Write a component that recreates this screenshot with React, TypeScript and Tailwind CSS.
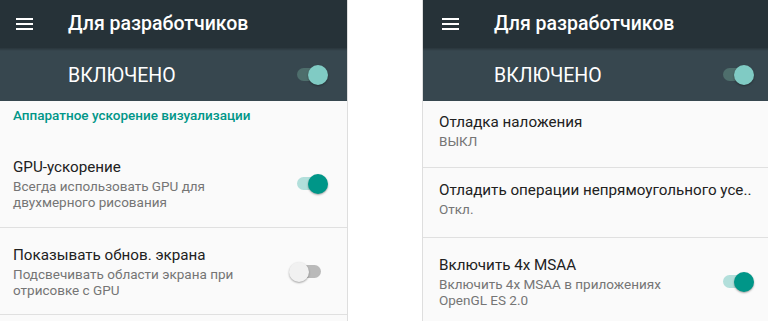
import React from 'react';

type Pref = {
  title: string;
  summary: string[];
  toggle?: 'on' | 'off';
  pad: string;
};

const Hamburger = () => (
  <div className="flex w-[17px] flex-col gap-[3px]">
    <span className="h-[2px] w-full bg-white" />
    <span className="h-[2px] w-full bg-white" />
    <span className="h-[2px] w-full bg-white" />
  </div>
);

const Toggle = ({ on, dark }: { on: boolean; dark?: boolean }) => {
  const track = dark ? 'bg-[#4e6e6c]' : on ? 'bg-[#b2dfdb]' : 'bg-[#bababa]';
  const thumb = dark ? 'bg-[#80cbc4]' : on ? 'bg-[#009688]' : 'bg-[#f1f1f1]';
  return (
    <div className="relative flex h-[20px] w-[39px] shrink-0 items-center">
      <span className={`ml-[8px] h-[13px] w-[24px] rounded-full ${track}`} />
      <span
        className={`absolute top-0 size-[20px] rounded-full shadow-[0_1px_2px_rgba(0,0,0,0.35)] ${thumb} ${
          on ? 'right-0' : 'left-0'
        }`}
      />
    </div>
  );
};

const PrefRow = ({ item }: { item: Pref }) => (
  <div className={`flex items-center pl-[17px] pr-[28px] ${item.pad}`}>
    <div className="min-w-0 flex-1">
      <div className="whitespace-nowrap text-[15.2px] leading-[20px] text-[#212121]">{item.title}</div>
      <div className="mt-px text-[13.5px] leading-[16px] text-[#757575]">
        {item.summary.map((line) => (
          <div key={line} className="whitespace-nowrap">
            {line}
          </div>
        ))}
      </div>
    </div>
    {item.toggle && <Toggle on={item.toggle === 'on'} />}
  </div>
);

const Divider = () => <div className="h-px w-full bg-[#e0e0e0]" />;

const Phone = ({ children }: { children: React.ReactNode }) => (
  <div className="h-full w-[360px] bg-[#fafafa]">
    {/* TOOLBAR */}
    <div className="flex h-[48px] items-center bg-[#263238] pl-[20px]">
      <Hamburger />
      <span className="ml-[35px] text-[19.5px] font-medium text-white">Для разработчиков</span>
    </div>

    {/* MASTER SWITCH */}
    <div className="relative flex h-[53px] items-center bg-[#37474f] pl-[72px] pr-[28px]">
      <div className="absolute inset-x-0 top-0 h-[3px] bg-gradient-to-b from-black/25 to-transparent" />
      <span className="mt-[2px] flex-1 text-[19.5px] text-white">ВКЛЮЧЕНО</span>
      <Toggle on dark />
    </div>

    {children}
  </div>
);

const leftItems: Pref[] = [
  {
    title: 'GPU-ускорение',
    summary: ['Всегда использовать GPU для', 'двухмерного рисования'],
    toggle: 'on',
    pad: 'pt-[17px] pb-[17px]',
  },
  {
    title: 'Показывать обнов. экрана',
    summary: ['Подсвечивать области экрана при', 'отрисовке с GPU'],
    toggle: 'off',
    pad: 'pt-[17px] pb-[16px]',
  },
];

const rightItems: Pref[] = [
  { title: 'Отладка наложения', summary: ['ВЫКЛ'], pad: 'pt-[11px] pb-[18px]' },
  {
    title: 'Отладить операции непрямоугольного усе..',
    summary: ['Откл.'],
    pad: 'pt-[12px] pb-[20px]',
  },
  {
    title: 'Включить 4x MSAA',
    summary: ['Включить 4x MSAA в приложениях', 'OpenGL ES 2.0'],
    toggle: 'on',
    pad: 'pt-[17px] pb-[16px]',
  },
];

export default function App() {
  return (
    <div className="flex h-[321px] w-[768px] overflow-hidden bg-white font-['Roboto',sans-serif]">
      <div className="h-full w-[348px] shrink-0 overflow-hidden border-r border-[#dedede]">
        <div className="-ml-[4px] h-full">
          <Phone>
            <div className="pl-[17px] pt-[4px] pb-[15px] text-[13.5px] font-medium leading-[20px] text-[#009688]">
              Аппаратное ускорение визуализации
            </div>
            <PrefRow item={leftItems[0]} />
            <Divider />
            <PrefRow item={leftItems[1]} />
            <Divider />
          </Phone>
        </div>
      </div>

      <div className="w-[74px] shrink-0" />

      <div className="h-full w-[346px] shrink-0 overflow-hidden border-l border-[#dedede]">
        <div className="-ml-px h-full">
          <Phone>
            <PrefRow item={rightItems[0]} />
            <Divider />
            <PrefRow item={rightItems[1]} />
            <Divider />
            <PrefRow item={rightItems[2]} />
          </Phone>
        </div>
      </div>
    </div>
  );
}
